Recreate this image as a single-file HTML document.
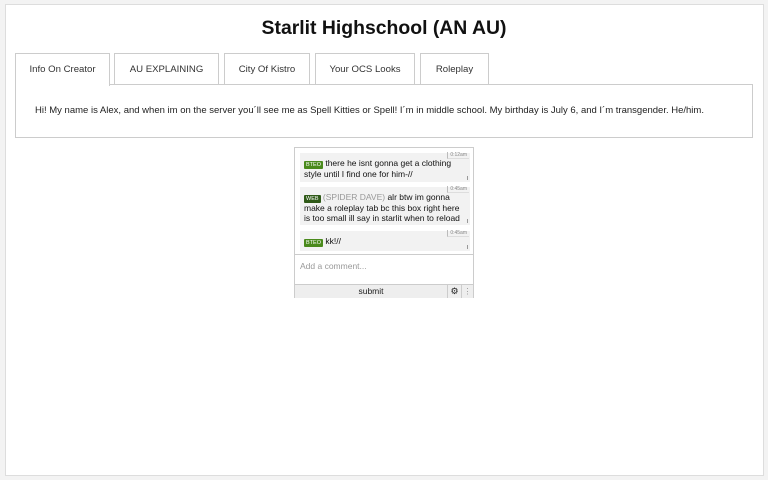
<!DOCTYPE html>
<html><head><meta charset="utf-8"><style>
*{box-sizing:border-box;margin:0;padding:0}
body{width:768px;height:480px;background:#f3f3f3;font-family:"Liberation Sans",sans-serif;color:#222;position:relative;overflow:hidden}
.card{position:absolute;left:5px;top:4px;width:759px;height:472px;background:#fff;border:1px solid #ddd}
h1{position:absolute;left:0;top:17px;width:768px;text-align:center;font-size:19.4px;font-weight:bold;color:#111}
.tab{position:absolute;top:53px;height:32px;border:1px solid #ccc;border-bottom:none;background:#fff;font-size:9.6px;line-height:31px;text-align:center;color:#333}
.tab.in{border-bottom:1px solid #ccc;height:32px}
.panel{position:absolute;left:15px;top:84px;width:738px;height:54px;border:1px solid #ccc;font-size:9.5px;line-height:52px;padding-left:19px;color:#222}
.chat{position:absolute;left:294px;top:147px;width:180px;height:151px;border:1px solid #ccc;background:#fff}
.msg{position:absolute;left:5px;width:170px;background:#f2f2f2;font-size:8.5px;line-height:10px;padding:5px 4px 0 4px;color:#111}
.time{position:absolute;right:1px;top:-1px;font-size:5px;color:#888;border-left:1px solid #bbb;border-bottom:1px solid #ddd;padding:0 2px;line-height:6px}
.tag{display:inline-block;background:#4a8a1c;color:#fff;font-size:5.5px;padding:0 2px;line-height:8px;vertical-align:0;border-radius:1px}
.tag.d{background:#2f5a18}
.bar{position:absolute;right:2px;bottom:2px;width:1px;height:4px;background:#999}
</style></head><body>
<div class="card"></div>
<h1>Starlit Highschool (AN AU)</h1>
<div class="tab" style="left:15px;width:95px;height:33px;z-index:2">Info On Creator</div>
<div class="tab in" style="left:114px;width:105px">AU EXPLAINING</div>
<div class="tab in" style="left:224px;width:86px">City Of Kistro</div>
<div class="tab in" style="left:315px;width:100px">Your OCS Looks</div>
<div class="tab in" style="left:420px;width:69px">Roleplay</div>
<div class="panel">Hi! My name is Alex, and when im on the server you´ll see me as Spell Kitties or Spell! I´m in middle school. My birthday is July 6, and I´m transgender. He/him.</div>
<div class="chat">
<div class="msg" style="top:5px;height:29px"><span class="time">0:12am</span><span class="tag">BTEO</span> there he isnt gonna get a clothing style until I find one for him-//<span class="bar"></span></div>
<div class="msg" style="top:39px;height:38px"><span class="time">0:45am</span><span class="tag d">WEB</span> <span style="color:#999">(SPIDER DAVE)</span> alr btw im gonna make a roleplay tab bc this box right here is too small ill say in starlit when to reload<span class="bar"></span></div>
<div class="msg" style="top:83px;height:20px"><span class="time">0:45am</span><span class="tag">BTEO</span> kk!//<span class="bar"></span></div>
<div style="position:absolute;left:0;top:106px;width:178px;border-top:1px solid #ccc;height:30px;font-size:8.5px;color:#999;padding:6px 5px">Add a comment...</div>
<div style="position:absolute;left:0;top:136px;width:178px;height:14px;border-top:1px solid #ccc;background:#eee;font-size:8.5px;line-height:13px">
<div style="position:absolute;left:0;width:152px;text-align:center">submit</div>
<div style="position:absolute;left:152px;width:14px;height:13px;border-left:1px solid #ccc;text-align:center;font-size:9px">⚙</div>
<div style="position:absolute;left:166px;width:12px;height:13px;border-left:1px solid #ccc;text-align:center;color:#999">⋮</div>
</div>
</div>
</body></html>
